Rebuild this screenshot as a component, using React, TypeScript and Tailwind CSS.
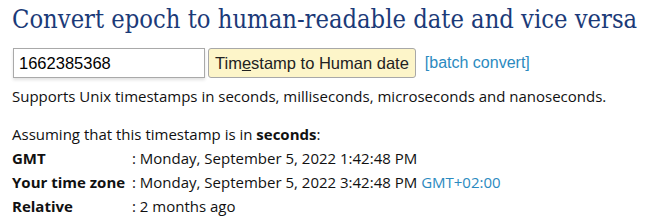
import React, { useState } from "react";

export default function App() {
  var [value, setValue] = useState("1662385368");

  const rows = [
    { label: "GMT", text: "Monday, September 5, 2022 1:42:48 PM", tz: "" },
    { label: "Your time zone", text: "Monday, September 5, 2022 3:42:48 PM", tz: "GMT+02:00" },
    { label: "Relative", text: "2 months ago", tz: "" },
  ];

  return (
    <div className="w-[648px] h-[222px] bg-white px-[12px] overflow-hidden">
      <h1 className="pt-[5px] text-[25.3px] leading-[30px] text-[#1b3a78] [font-family:'DejaVu_Serif_Condensed','DejaVu_Serif',serif] whitespace-nowrap">
        Convert epoch to human-readable date and vice versa
      </h1>
      <div className="mt-[13px] flex items-center [font-family:'Liberation_Sans',Arial,sans-serif] text-[16.5px]">
        <input
          type="text"
          value={value}
          onChange={(e) => setValue(e.target.value)}
          className="ml-[1px] w-[192px] h-[30px] border border-[#a9a9a9] px-[5px] text-black outline-none shadow-[0_2px_3px_rgba(0,0,0,0.12)]"
        />
        <button className="ml-[3px] h-[30px] px-[6px] bg-[#fdf5c9] border border-[#a8a8a8] rounded-[3px] text-[#222] whitespace-nowrap">
          Tim<span className="underline">e</span>stamp to Human date
        </button>
        <a href="#" className="ml-[9px] text-[16px] text-[#2b8ac0] whitespace-nowrap">[batch convert]</a>
      </div>
      <div className="[font-family:'Open_Sans',sans-serif] text-[15px] text-[#111]">
        <p className="mt-[7px] leading-[22px]">
          Supports Unix timestamps in seconds, milliseconds, microseconds and nanoseconds.
        </p>
        <p className="mt-[15px] leading-[24px]">
          Assuming that this timestamp is in <b>seconds</b>:
        </p>
        {rows.map((r, i) => (
          <div className="flex leading-[24px]" key={i}>
            <div className="w-[120px] font-bold whitespace-nowrap">{r.label}</div>
            <div className="whitespace-nowrap">
              : {r.text}
              {r.tz && <span className="text-[#2b8ac0]"> {r.tz}</span>}
            </div>
          </div>
        ))}
      </div>
    </div>
  );
}
